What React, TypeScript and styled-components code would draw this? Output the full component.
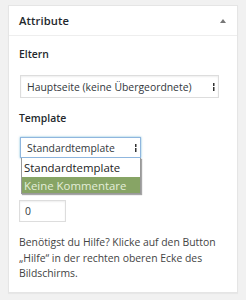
import React from 'react';
import styled, { createGlobalStyle } from 'styled-components';

const GlobalStyle = createGlobalStyle`
    body {
        margin: 0;
        background: #f1f1f1;
        font-family: 'Open Sans', 'Noto Sans', sans-serif;
        color: #444;
    }
`;

const Page = styled.div`
    width: 246px;
    height: 300px;
    padding: 5px 8px 0 8px;
    box-sizing: border-box;
`;

const Panel = styled.div`
    width: 230px;
    background: #fff;
    border: 1px solid #e5e5e5;
    box-shadow: 0 1px 1px rgba(0, 0, 0, 0.04);
    box-sizing: border-box;
`;

const Header = styled.div`
    height: 29px;
    padding: 0 10px;
    display: flex;
    align-items: center;
    justify-content: space-between;
    border-bottom: 1px solid #eee;
`;

const Title = styled.span`
    font-size: 11.2px;
    font-weight: 600;
    color: #23282d;
    letter-spacing: 0.1px;
`;

const Toggle = styled.span`
    width: 0;
    height: 0;
    margin-right: 1px;
    border-left: 3px solid transparent;
    border-right: 3px solid transparent;
    border-bottom: 4px solid #777;
`;

const Body = styled.div`
    padding: 9px 10px 10px 10px;
`;

const Label = styled.div<{ gap?: number }>`
    font-size: 10.4px;
    font-weight: 600;
    color: #23282d;
    line-height: 18px;
    margin-top: ${p => p.gap ?? 0}px;
    margin-bottom: ${p => (p.gap ? 10 : 12)}px;
`;

const SelectWrap = styled.div`
    position: relative;
`;

const Select = styled.div<{ width: number; height: number; focused?: boolean }>`
    width: ${p => p.width}px;
    height: ${p => p.height}px;
    box-sizing: border-box;
    display: flex;
    align-items: center;
    justify-content: space-between;
    padding: 0 3px 0 6px;
    margin-left: 1px;
    border: 1px solid ${p => (p.focused ? '#8fb6de' : '#ddd')};
    box-shadow: ${p => (p.focused ? '0 0 2px rgba(30, 140, 190, 0.6)' : 'inset 0 1px 2px rgba(0, 0, 0, 0.07)')};
    background: #fff;
    font-size: 10.4px;
    color: #32373c;
`;

const Menu = styled.div`
    position: absolute;
    top: 100%;
    left: 2px;
    width: 120px;
    background: #fff;
    border: 1px solid #999;
    border-top: none;
    box-shadow: 1px 1px 1px rgba(0, 0, 0, 0.35);
    box-sizing: border-box;
    z-index: 2;
`;

const Option = styled.div<{ active?: boolean }>`
    height: ${p => (p.active ? 16 : 19)}px;
    display: flex;
    align-items: center;
    padding: 0 2px;
    font-size: 11.4px;
    color: ${p => (p.active ? '#e4eed9' : '#222')};
    background: ${p => (p.active ? '#87a465' : '#fff')};
`;

const NumberInput = styled.div`
    width: 47px;
    height: 22px;
    box-sizing: border-box;
    margin-top: 42px;
    padding: 0 5px;
    display: flex;
    align-items: center;
    border: 1px solid #ddd;
    box-shadow: inset 0 1px 2px rgba(0, 0, 0, 0.07);
    font-size: 10.4px;
    color: #32373c;
`;

const Help = styled.p`
    margin: 13px 0 0 0;
    font-size: 10.4px;
    line-height: 15.5px;
    color: #444;
`;

const Arrows = () => (
    <svg width="3" height="8" viewBox="0 0 3 8">
        <rect x="1" y="0" width="1.5" height="3" fill="#333" />
        <rect x="1" y="4" width="1.5" height="4" fill="#333" />
    </svg>
);

export default function App() {
    return (
        <Page>
            <GlobalStyle />
            <Panel>
                <Header>
                    <Title>Attribute</Title>
                    <Toggle />
                </Header>
                <Body>
                    <Label>Eltern</Label>
                    <Select width={199} height={23}>
                        <span>Hauptseite (keine Übergeordnete)</span>
                        <Arrows />
                    </Select>
                    <Label gap={11}>Template</Label>
                    <SelectWrap>
                        <Select width={121} height={21} focused>
                            <span>Standardtemplate</span>
                            <Arrows />
                        </Select>
                        <Menu>
                            <Option>Standardtemplate</Option>
                            <Option active>Keine Kommentare</Option>
                        </Menu>
                    </SelectWrap>
                    <NumberInput>0</NumberInput>
                    <Help>
                        Benötigst du Hilfe? Klicke auf den Button „Hilfe“ in der rechten oberen Ecke des Bildschirms.
                    </Help>
                </Body>
            </Panel>
        </Page>
    );
}
